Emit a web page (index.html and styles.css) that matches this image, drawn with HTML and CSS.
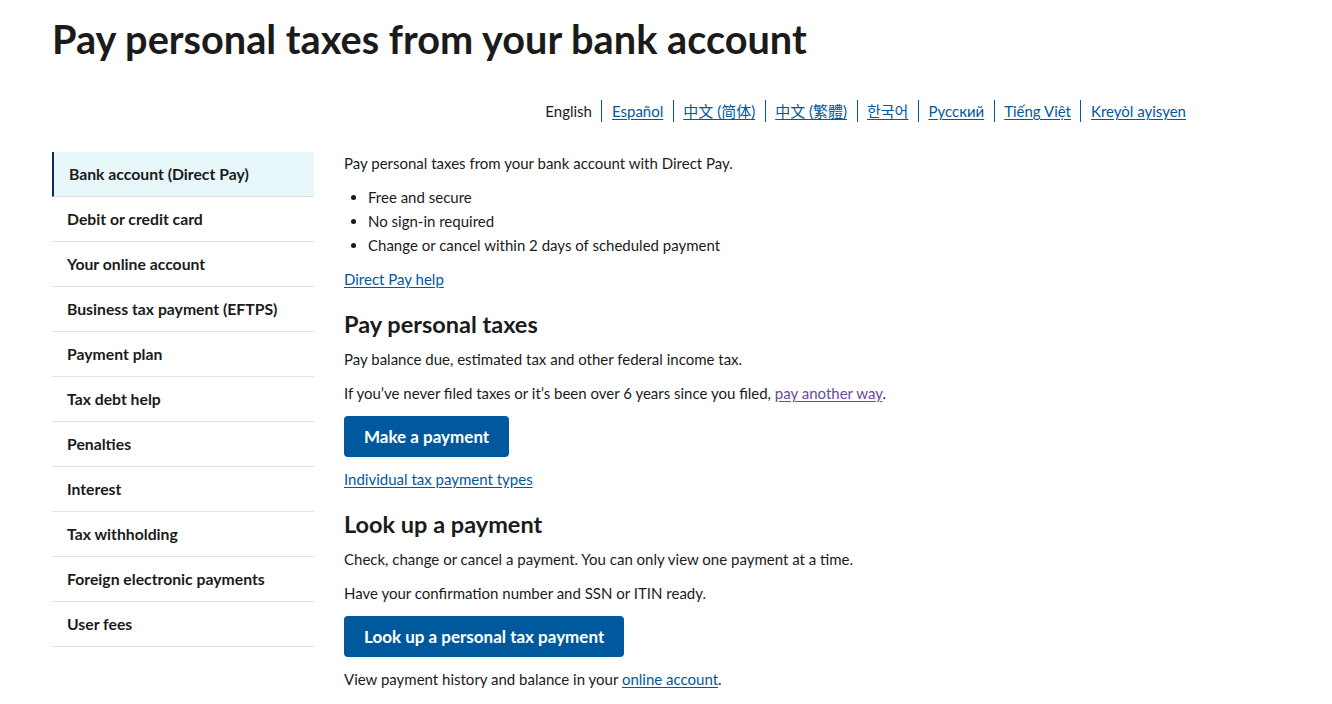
FILE: index.html
```html
<!DOCTYPE html>
<html lang="en">
<head>
<meta charset="utf-8">
<title>Pay personal taxes from your bank account</title>
<link rel="stylesheet" href="styles.css">
</head>
<body>
<div class="page">
  <h1 class="title">Pay personal taxes from your bank account</h1>
  <nav class="langs">
    <span class="lang current">English</span>
    <a class="lang" href="#">Español</a>
    <a class="lang cjk-sc" href="#">中文 (简体)</a>
    <a class="lang cjk-tc" href="#">中文 (繁體)</a>
    <a class="lang cjk-kr" href="#">한국어</a>
    <a class="lang" href="#">Русский</a>
    <a class="lang" href="#">Tiếng Việt</a>
    <a class="lang" href="#">Kreyòl ayisyen</a>
  </nav>
  <div class="layout">
    <ul class="sidenav">
      <li class="item active">Bank account (Direct Pay)</li>
      <li class="item">Debit or credit card</li>
      <li class="item">Your online account</li>
      <li class="item">Business tax payment (EFTPS)</li>
      <li class="item">Payment plan</li>
      <li class="item">Tax debt help</li>
      <li class="item">Penalties</li>
      <li class="item">Interest</li>
      <li class="item">Tax withholding</li>
      <li class="item">Foreign electronic payments</li>
      <li class="item">User fees</li>
    </ul>
    <main class="content">
      <p>Pay personal taxes from your bank account with Direct Pay.</p>
      <ul class="bullets">
        <li>Free and secure</li>
        <li>No sign-in required</li>
        <li>Change or cancel within 2 days of scheduled payment</li>
      </ul>
      <p><a href="#">Direct Pay help</a></p>
      <h2>Pay personal taxes</h2>
      <p>Pay balance due, estimated tax and other federal income tax.</p>
      <p>If you’ve never filed taxes or it’s been over 6 years since you filed, <a class="visited" href="#">pay another way</a>.</p>
      <div class="btn-row"><a class="btn" href="#">Make a payment</a></div>
      <p><a href="#">Individual tax payment types</a></p>
      <h2>Look up a payment</h2>
      <p>Check, change or cancel a payment. You can only view one payment at a time.</p>
      <p>Have your confirmation number and SSN or ITIN ready.</p>
      <div class="btn-row"><a class="btn" href="#">Look up a personal tax payment</a></div>
      <p>View payment history and balance in your <a href="#">online account</a>.</p>
    </main>
  </div>
</div>
</body>
</html>
```
FILE: styles.css
```css
html, body {
  margin: 0;
  padding: 0;
  background: #ffffff;
}
body {
  font-family: Lato, "Liberation Sans", sans-serif;
  color: #1b1b1b;
  font-size: 15px;
  line-height: 24px;
}
.page {
  width: 1134px;
  padding: 0 0 0 52px;
}
.title {
  margin: 0;
  padding-top: 14px;
  font-size: 39.7px;
  line-height: 50px;
  font-weight: 700;
  letter-spacing: 0;
}
.langs {
  display: flex;
  justify-content: flex-end;
  align-items: center;
  margin-top: 35px;
  height: 24px;
}
.lang {
  font-size: 15px;
  line-height: 22px;
  padding: 0 9.5px;
  border-left: 1px solid #00599c;
  color: #00599c;
  text-decoration: underline;
  text-underline-offset: 2px;
}
.lang.current {
  border-left: none;
  color: #1b1b1b;
  text-decoration: none;
}
.lang:last-child { padding-right: 0; }
.cjk-sc { font-family: Lato, "Noto Sans CJK SC", sans-serif; }
.cjk-tc { font-family: Lato, "Noto Sans CJK TC", sans-serif; }
.cjk-kr { font-family: Lato, "Noto Sans CJK KR", sans-serif; }
.layout {
  display: flex;
  gap: 30px;
  margin-top: 28px;
}
.sidenav {
  list-style: none;
  margin: 1px 0 0 0;
  padding: 0;
  width: 262px;
  flex: none;
}
.item {
  height: 44px;
  line-height: 43px;
  padding-left: 15px;
  font-size: 15.75px;
  font-weight: 700;
  border-bottom: 1px solid #dfe1e2;
}
.item.active {
  background: #e6f6f9;
  border-left: 2px solid #0b2f5c;
  padding-left: 15px;
}
.content {
  flex: 1;
}
.content p {
  margin: 0 0 10px 0;
}
.bullets {
  margin: 0 0 10px 0;
  padding-left: 24px;
}
.bullets li {
  line-height: 24px;
}
a {
  color: #00599c;
  text-decoration: underline;
  text-underline-offset: 2px;
}
a.visited {
  color: #6c4a9c;
}
.content h2 {
  margin: 18px 0 8px 0;
  font-size: 23.5px;
  line-height: 30px;
  font-weight: 700;
}
.btn-row {
  margin: 11px 0 10px 0;
  line-height: 0;
}
.btn {
  display: inline-block;
  background: #00599c;
  color: #ffffff;
  text-decoration: none;
  font-weight: 700;
  font-size: 17px;
  line-height: 41px;
  height: 41px;
  padding: 0 20px;
  border-radius: 4px;
}
```
